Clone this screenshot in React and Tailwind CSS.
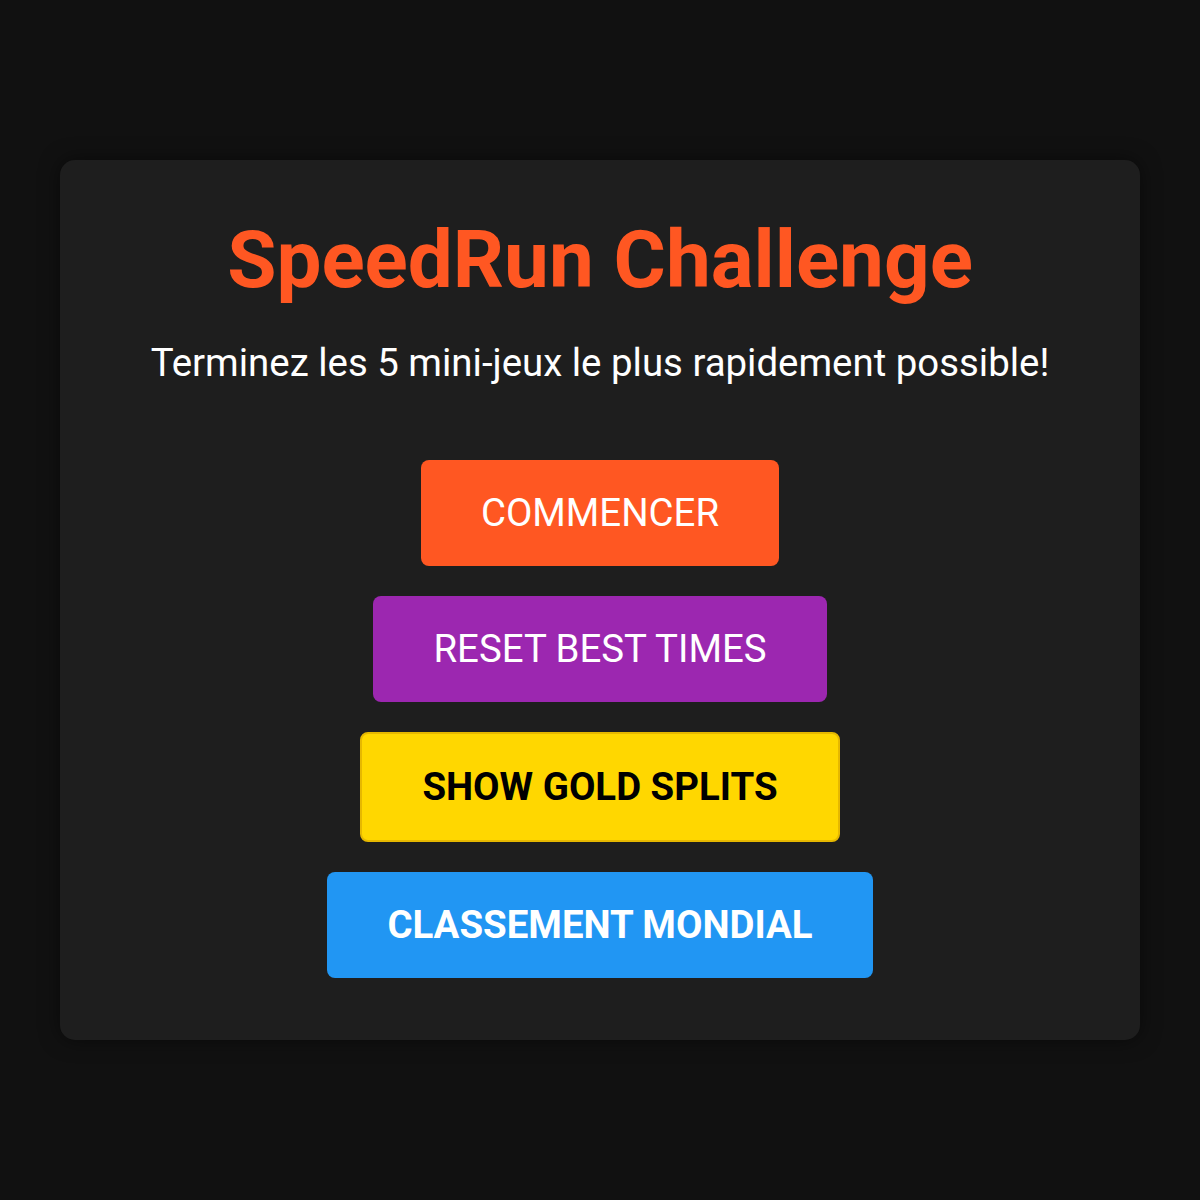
import React from "react";

const buttons = [
  { label: "COMMENCER", className: "bg-[#ff5722] text-white font-normal" },
  { label: "RESET BEST TIMES", className: "bg-[#9c27b0] text-white font-normal" },
  {
    label: "SHOW GOLD SPLITS",
    className: "bg-[#ffd700] text-black font-bold border-2 border-[#e6b800]",
  },
  { label: "CLASSEMENT MONDIAL", className: "bg-[#2196f3] text-white font-bold" },
];

export default function App() {
  return (
    <div className="min-h-[1200px] bg-[#111111] flex items-center justify-center font-['Roboto',sans-serif]">
      <div className="w-[1080px] h-[880px] bg-[#1e1e1e] rounded-[15px] shadow-[0_0_20px_rgba(0,0,0,0.5)] px-[60px] pt-[52px] flex flex-col items-center">
        <h1 className="text-[80px] leading-[1.2] font-bold text-[#ff5722]">
          SpeedRun Challenge
        </h1>
        <p className="mt-[32px] text-[38.4px] leading-[1.2] text-white">
          Terminez les 5 mini-jeux le plus rapidement possible!
        </p>
        <div className="mt-[74px] flex flex-col items-center gap-[30px]">
          {buttons.map((b) => (
            <button
              key={b.label}
              className={`rounded-[8px] px-[60px] py-[32px] text-[38.4px] leading-[42px] ${b.className}`}
            >
              {b.label}
            </button>
          ))}
        </div>
      </div>
    </div>
  );
}
